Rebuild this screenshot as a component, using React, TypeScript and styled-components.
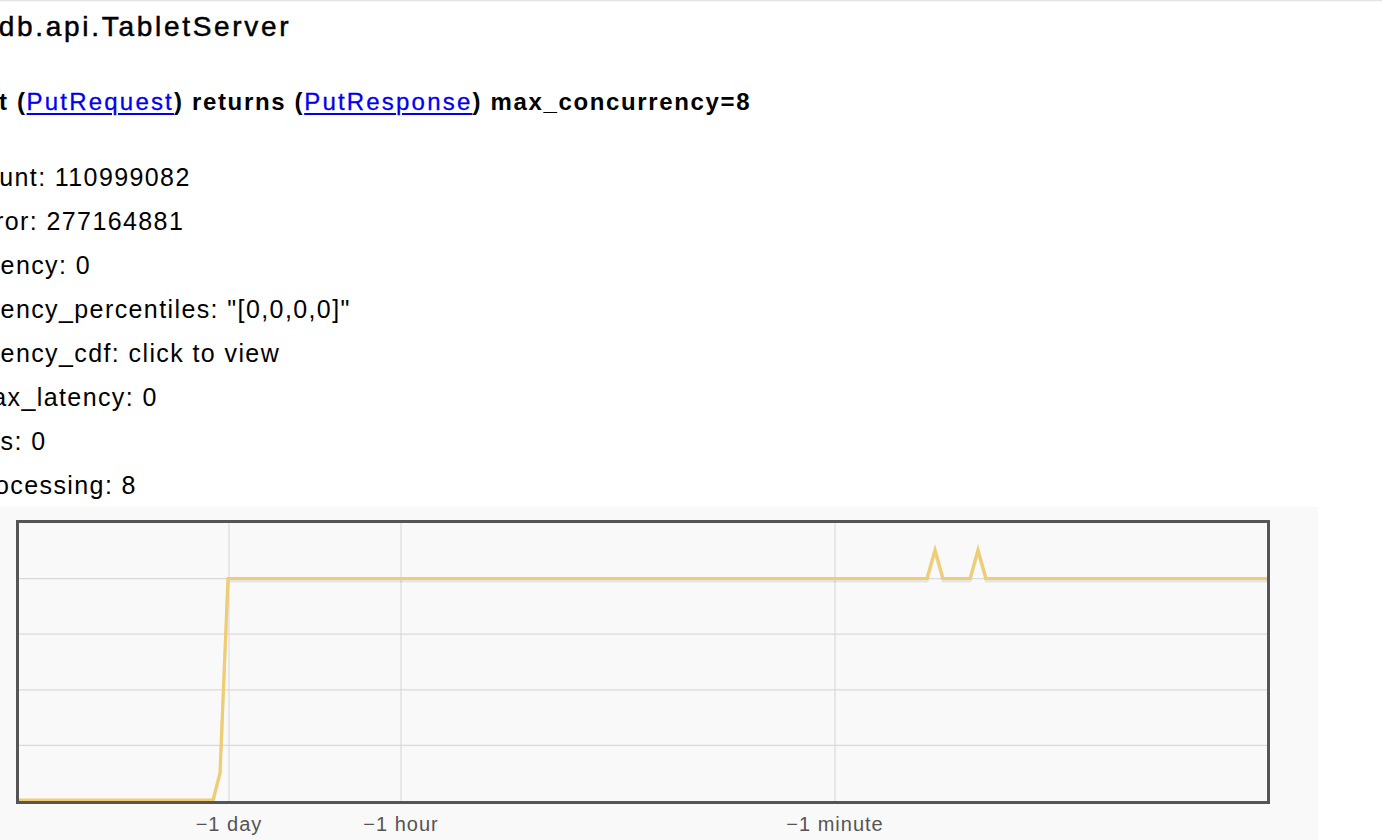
import React from "react";
import styled, { createGlobalStyle } from "styled-components";

const GlobalStyle = createGlobalStyle`
  html, body {
    margin: 0;
    padding: 0;
    background: #ffffff;
    overflow: hidden;
  }
  body {
    font-family: "Liberation Sans", Arial, Helvetica, sans-serif;
    color: #000;
  }
`;

const TopEdge = styled.div`
  height: 1px;
  background: #e4e4e4;
  box-shadow: 0 1px 1px rgba(0, 0, 0, 0.04);
`;

const Page = styled.div`
  margin-left: -30px;
  width: 1412px;
`;

const ServiceTitle = styled.div`
  margin-top: 6px;
  font-size: 28px;
  line-height: 40px;
  letter-spacing: 2.7px;
  -webkit-text-stroke: 0.5px #000;
  white-space: nowrap;
`;

const MethodLine = styled.div`
  margin-top: 39px;
  margin-left: -5px;
  font-size: 24px;
  line-height: 32px;
  font-weight: 700;
  letter-spacing: 1.65px;
  white-space: nowrap;
`;

const TypeLink = styled.a`
  color: #0000ee;
  text-decoration: underline;
  text-decoration-thickness: 2px;
  text-underline-offset: 3px;
  font-weight: 400;
  letter-spacing: 2.2px;
  -webkit-text-stroke: 0.3px #0000ee;
`;

const StatList = styled.div`
  margin-top: 37px;
  display: flex;
  flex-direction: column;
`;

const StatRow = styled.div`
  font-size: 25px;
  line-height: 44px;
  letter-spacing: 1.4px;
  white-space: nowrap;
`;

const ChartPanel = styled.div`
  width: 1348px;
  height: 340px;
  background: #f9f9f9;
  padding: 13px 0 0 46px;
  box-sizing: border-box;
`;

const TickLabel = styled.text`
  font-family: "Liberation Sans", Arial, Helvetica, sans-serif;
  font-size: 20px;
  letter-spacing: 1px;
  fill: #545454;
`;

const stats: string[] = [
  "count: 110999082",
  "error: 277164881",
  "latency: 0",
  'latency_percentiles: "[0,0,0,0]"',
  "latency_cdf: click to view",
  "max_latency: 0",
  "qps: 0",
  "processing: 8",
];

const points: [number, number][] = [
  [3, 280],
  [197, 280],
  [204, 253],
  [212, 58.5],
  [911, 58.5],
  [919, 30],
  [927, 58.5],
  [954, 58.5],
  [962, 30],
  [970, 58.5],
  [1251, 58.5],
];

const hGrid = [58.6, 114.2, 169.8, 225.4];
const vGrid = [213, 385, 819];
const ticks: { x: number; label: string }[] = [
  { x: 213, label: "\u22121 day" },
  { x: 385, label: "\u22121 hour" },
  { x: 819, label: "\u22121 minute" },
];

function TrendChart() {
  const d = points.map((p, i) => `${i === 0 ? "M" : "L"}${p[0]} ${p[1]}`).join(" ");
  return (
    <ChartPanel>
      <svg width={1260} height={330} viewBox="0 0 1260 330">
        {hGrid.map((y) => (
          <line key={`h${y}`} x1={3} x2={1251} y1={y} y2={y} stroke="#dadada" strokeWidth={1.2} />
        ))}
        {vGrid.map((x) => (
          <line key={`v${x}`} x1={x} x2={x} y1={3} y2={281} stroke="#dadada" strokeWidth={1.2} />
        ))}
        <path d={d} transform="translate(0 2.5)" fill="none" stroke="rgba(0,0,0,0.08)" strokeWidth={3} strokeLinejoin="miter" />
        <path d={d} fill="none" stroke="#f0cd72" strokeWidth={3.2} strokeLinejoin="miter" />
        <rect x={1.5} y={1.5} width={1251} height={281} fill="none" stroke="#555555" strokeWidth={3} />
        {ticks.map((t) => (
          <TickLabel key={t.label} x={t.x} y={311} textAnchor="middle">
            {t.label}
          </TickLabel>
        ))}
      </svg>
    </ChartPanel>
  );
}

export default function App() {
  return (
    <>
      <GlobalStyle />
      <TopEdge />
      <Page>
        <ServiceTitle>fedb.api.TabletServer</ServiceTitle>
        <MethodLine>
          Put (<TypeLink href="#">PutRequest</TypeLink>) returns (
          <TypeLink href="#">PutResponse</TypeLink>) max_concurrency=8
        </MethodLine>
        <StatList>
          {stats.map((s) => (
            <StatRow key={s}>{s}</StatRow>
          ))}
        </StatList>
        <TrendChart />
      </Page>
    </>
  );
}
